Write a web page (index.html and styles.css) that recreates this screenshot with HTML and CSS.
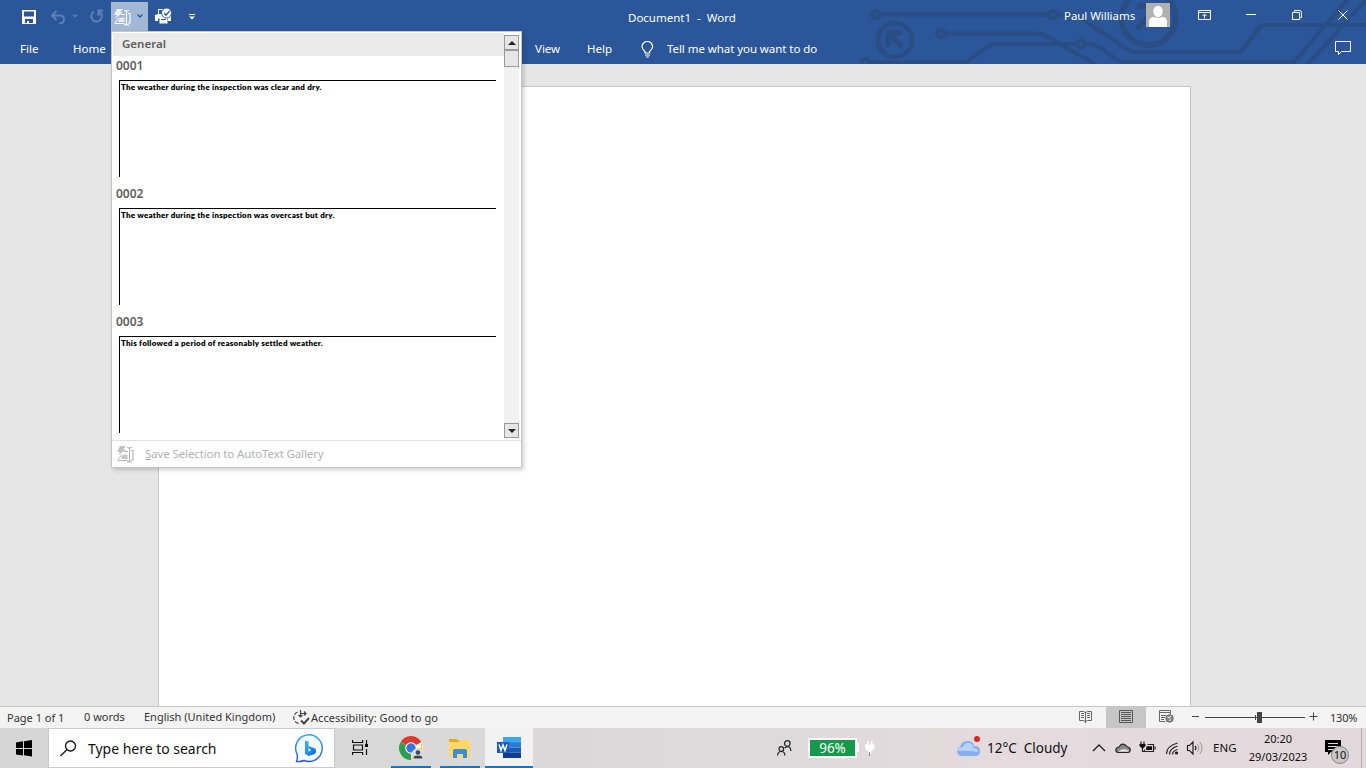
FILE: index.html
```
<!DOCTYPE html>
<html lang="en">
<head>
  <meta charset="UTF-8">
  <meta name="viewport" content="width=device-width, initial-scale=1.0">
  <title>Document1 - Word</title>
  <link rel="stylesheet" href="styles.css">
</head>
<body>
  <div class="screen">
    <header class="header">
      <svg class="circuit" width="506" height="64" viewBox="860 0 506 64">
        <g fill="none" stroke="#2a4d83" stroke-width="4">
          <circle cx="875.5" cy="14.5" r="3.6"/>
          <path d="M879 14.5h170"/>
          <circle cx="1053" cy="14.5" r="3.6"/>
          <path d="M1057 14.5h13q7 0 13 5l41 28q6 4.500 11 4.500h103q3 0 5-3l15-20q3-4 7-4h101"/>
          <circle cx="941" cy="33.500" r="3.6"/>
          <path d="M945 33.500h92q6 0 12 4l47 27"/>
          <circle cx="865" cy="62.500" r="3.6"/>
          <path d="M869 62.500h97l20-15q5-3.500 9-3.500h82"/>
          <circle cx="1081" cy="44" r="3.6"/>
          <path d="M1085 44h4q6 0 12 4l15 11q4 3 8 3h170l55-64M1307 65l60-66"/>
          <circle cx="895" cy="40" r="17" stroke-width="4.500"/>
          <path d="M902 33h-14v14M888 33l14 14" stroke-width="5"/>
          <circle cx="1148.500" cy="18" r="27" stroke-width="6"/>
          <path d="M1137 6h22v22M1159 6l-22 23" stroke-width="6"/>
        </g>
      </svg>
      <div class="titlebar">
        <div class="quick">
          <svg class="save" width="14" height="14" viewBox="0 0 14 14"><path fill="#fff" fill-rule="evenodd" d="M0 0h14v14H0zM2 1.500v5h10v-5zM3 9v4h2v-2h2v2h4V9z"/></svg>
          <svg class="undo" width="28" height="14" viewBox="0 0 28 14" fill="none" stroke="#5f80b3"><path d="M5.500 1L1 5.500 5.500 10M1 5.500h8q4 0 4 4t-4 4H8" stroke-width="2"/><path d="M22 4.500l2.200 2.200 2.200-2.200" stroke-width="1.300"/></svg>
          <svg class="redo" width="14" height="14" viewBox="0 0 14 14" fill="none" stroke="#5f80b3" stroke-width="2"><path d="M9.500 2.800A5.300 5.300 0 1 1 4 2.600M8.500 7V1.500H13"/></svg>
          <div class="autotext">
            <svg width="17" height="17" viewBox="0 0 17 17"><use href="#autotext-icon"/></svg>
            <svg class="arrow" width="6" height="4" viewBox="0 0 6 4"><path d="M.5.500L3 3 5.500.500" fill="none" stroke="#2b579a" stroke-width="1.300"/></svg>
          </div>
          <svg class="print" width="17" height="17" viewBox="0 0 17 17">
            <path fill="#fff" d="M3 1h5v1H4v4h9l3 1v6h-3v-2.500H3V13H0V7l3-1z"/>
            <path d="M4.500 10h8v5.500h-8z" fill="#fff"/>
            <path d="M6 11.500h5" stroke="#2b579a"/>
            <circle cx="11.500" cy="5" r="5" fill="#fff" stroke="#2b579a"/>
            <path d="M9 5l2 2.200L14.500 3" fill="none" stroke="#2b579a" stroke-width="1.400"/>
          </svg>
          <svg class="customize" width="6" height="6" viewBox="0 0 6 6"><path d="M0 0h6v1H0zM0 2.500h6L3 5.500z" fill="#fff"/></svg>
        </div>
        <div class="doc-title">Document1 &nbsp;-&nbsp; Word</div>
        <div class="user">Paul Williams</div>
        <svg class="avatar" width="24" height="24" viewBox="0 0 24 24"><path fill="#b1b1b1" d="M0 0h24v24H0z"/><ellipse cx="12" cy="8.500" rx="4.700" ry="5.700" fill="#fff"/><path fill="#fff" d="M3 24v-5q0-5 5-5 4 2 8 0 5 0 5 5v5z"/></svg>
        <svg class="window-buttons" width="155" height="14" viewBox="1197 8 155 14" fill="none" stroke="#fff">
          <path d="M1198.500 10.500h12v9h-12zM1198 12.500h13M1204.500 18.500v-4M1202.500 16l2-2 2 2M1246 14.500h10M1292.500 12.500h7v7h-7zM1294.500 12v-1.500h5q2 0 2 2v5H1300M1338.500 10.500l9 9M1347.500 10.500l-9 9"/>
        </svg>
      </div>
      <nav class="tabs">
        <span class="tab file">File</span>
        <span class="tab home">Home</span>
        <span class="tab view">View</span>
        <span class="tab help">Help</span>
        <svg class="bulb" width="13" height="17" viewBox="0 0 13 17" fill="none" stroke="#fff" stroke-width="1.200"><path d="M4 12V10.500Q1 8 1 5.500a5.300 5 0 0 1 10.600 0Q11.600 8 8.600 10.500V12zM4 14h5M5 16h3"/></svg>
        <span class="tab tell">Tell me what you want to do</span>
        <svg class="comment" width="17" height="15" viewBox="0 0 17 15" fill="none" stroke="#fff"><path d="M.5.500h15v10h-9l-3 3v-3h-3z"/></svg>
      </nav>
    </header>

    <main class="workspace">
      <div class="page"></div>
      <div class="gallery">
        <div class="gallery-body">
          <div class="entries">
            <div class="category">General</div>
            <div class="entry">
              <h3>0001</h3>
              <div class="preview">The weather during the inspection was clear and dry.</div>
            </div>
            <div class="entry">
              <h3>0002</h3>
              <div class="preview">The weather during the inspection was overcast but dry.</div>
            </div>
            <div class="entry">
              <h3>0003</h3>
              <div class="preview">This followed a period of reasonably settled weather.</div>
            </div>
          </div>
          <div class="scrollbar">
            <div class="scroll-btn"><svg width="8" height="4" viewBox="0 0 8 4"><path d="M0 4h8L4 0z" fill="#222"/></svg></div>
            <div class="thumb"></div>
            <div class="scroll-btn down"><svg width="8" height="4" viewBox="0 0 8 4"><path d="M0 0h8L4 4z" fill="#222"/></svg></div>
          </div>
        </div>
        <div class="gallery-footer">
          <svg width="17" height="17" viewBox="0 0 17 17"><use href="#autotext-icon"/></svg>
          <span><u>S</u>ave Selection to AutoText Gallery</span>
        </div>
      </div>
    </main>

    <footer class="statusbar">
      <span class="pages">Page 1 of 1</span>
      <span class="words">0 words</span>
      <span class="language">English (United Kingdom)</span>
      <svg class="access-icon" width="17" height="16" viewBox="0 0 17 16" fill="none" stroke="#444" stroke-width="1.200"><path d="M4.500 2A6 6 0 0 0 6 13.500" stroke-dasharray="4 1.500"/><path d="M7.500 0v7M5.500 5l2 2 2-2M7 3.500h6M11 1.500l2 2-2 2"/><path d="M8 10.500l3 3 5-5.500" stroke-width="1.900"/></svg>
      <span class="access">Accessibility: Good to go</span>
      <svg class="read" width="13" height="13" viewBox="0 0 13 13" fill="none" stroke="#666"><path d="M.5 1.500h4l2 1 2-1h4v9h-4l-2 1-2-1h-4zM6.500 2v11M2 3.500h3M2 5.500h3M2 7.500h3M8 3.500h3M8 5.500h3M8 7.500h3"/></svg>
      <div class="print-view"><svg width="14" height="13" viewBox="0 0 14 13" fill="none" stroke="#555"><path d="M.5.500h13v12H.5zM2 2.500h10M2 4.500h10M2 6.500h10M2 8.500h10M2 10.500h10"/></svg></div>
      <svg class="web" width="15" height="13" viewBox="0 0 15 13" fill="none" stroke="#666"><path d="M6 11.500H.5V.500h11v4M0 2.500h12M2 5.500h5M2 7.500h4M2 9.500h3"/><circle cx="10.500" cy="8.500" r="3.700" fill="#888"/><path d="M8.500 7l2 1 1-2M10 11l2-1.500" stroke="#eee"/></svg>
      <svg class="zoom" width="127" height="13" viewBox="1191 0 127 13" fill="none" stroke="#444"><path d="M1192 6.500h7M1205 7.500h100M1309.500 6.500h8M1313.500 2.500v8M1255.500 5v5"/><path d="M1257 2h5v11h-5z" fill="#444" stroke="none"/></svg>
      <span class="percent">130%</span>
    </footer>

    <div class="taskbar">
      <svg class="start" width="17" height="17" viewBox="0 0 17 17"><path d="M0 2.500L7 1.300V8H0zM8 1.200L16 0v8H8zM0 9h7v6.600l-7-1zM8 9h8v7.500l-8-1.200z"/></svg>
      <div class="search">
        <svg width="18" height="17" viewBox="0 0 18 17" fill="none" stroke="#111" stroke-width="1.300"><circle cx="10.500" cy="6" r="5"/><path d="M7 9.500L.5 16"/></svg>
        <span>Type here to search</span>
        <svg class="bing" width="29" height="29" viewBox="0 0 29 29">
          <defs>
            <linearGradient id="ring" x2="0" y2="1"><stop stop-color="#29a9ed"/><stop offset="1" stop-color="#2457cb"/></linearGradient>
            <linearGradient id="b" x2="1" y2="1"><stop stop-color="#30bbed"/><stop offset="1" stop-color="#1565d8"/></linearGradient>
          </defs>
          <path d="M1.500 27.500Q3 24 2 20A13.300 13.300 0 1 1 9 26.500Q5 28 1.500 27.500z" fill="#f4f8ff" stroke="url(#ring)" stroke-width="1.400"/>
          <path d="M10 6.500l3.500 1.300v10l2.800-1.700-2-1-1-3 7 2.500q2 4-1 5.700L13.500 22 10 19.800z" fill="url(#b)"/>
        </svg>
      </div>
      <svg class="taskview" width="17" height="15" viewBox="0 0 17 15" fill="none" stroke="#111" stroke-width="1.200"><path d="M.6 0v2.500h10V0M1.500 5h9v5h-9zM.6 15v-2.500h10V15M14.500 0v4M14.500 9v6"/><path d="M13 4h3v3h-3z" fill="#111" stroke="none"/></svg>
      <div class="app chrome">
        <svg width="26" height="26" viewBox="0 0 26 26">
          <circle cx="12" cy="12" r="12" fill="#fff"/>
          <path d="M12 12L1.600 6A12 12 0 0 1 22.400 6z" fill="#df3a30"/>
          <path d="M12 12L1.600 6A12 12 0 0 0 12 24z" fill="#2f9e4f"/>
          <path d="M12 12h10V6A12 12 0 0 1 12 24l3-9z" fill="#f8cc34"/>
          <circle cx="12" cy="12" r="5.800" fill="#fff"/><circle cx="12" cy="12" r="4.700" fill="#3478de"/>
          <circle cx="19" cy="19" r="6.700" fill="#d6dce1"/><circle cx="19" cy="16.500" r="2.300" fill="#404850"/><path d="M14.700 22.500v-1q0-2 4.300-2t4.300 2v1z" fill="#404850"/>
        </svg>
      </div>
      <div class="app explorer">
        <svg width="22" height="19" viewBox="0 0 22 19"><path d="M0 0h8l2 2h11v16H0z" fill="#e4a91e"/><path d="M10 1h11v3H10zM0 3h21v15H0z" fill="#ffd867"/><path d="M4 19v-7q0-2 2-2h10q2 0 2 2v7h-4v-4H8v4z" fill="#3b8ed5"/></svg>
      </div>
      <div class="app word">
        <svg width="24" height="21" viewBox="0 0 24 21"><path d="M6 0h18v6H6z" fill="#41a5ee"/><path d="M6 5.500h18v5H6z" fill="#2b7cd3"/><path d="M6 10.500h18v5H6z" fill="#185abd"/><path d="M6 15.500h18V21H6z" fill="#103f91"/><path d="M0 5h12v11H0z" fill="#185abd"/><path d="M2 7.500l2 6 2-5.500 2 5.500 2-6" fill="none" stroke="#fff" stroke-width="1.500"/></svg>
      </div>
      <svg class="people" width="15" height="16" viewBox="0 0 15 16" fill="none" stroke="#222" stroke-width="1.200"><circle cx="10.300" cy="3.500" r="2.800"/><circle cx="4.300" cy="9" r="2.300"/><path d="M.7 15.500q0-4 3.600-4t3.600 4M7.500 8q5.500-4 6.500 3"/></svg>
      <div class="battery">96%</div>
      <svg class="plug" width="18" height="16" viewBox="0 0 18 16"><path d="M0 3h2v9H0zM10 1h1.500v4H10zM14 1h1.500v4H14zM8 4.500h9.500v3q-.5 3-3.500 4V14h-2.500v-2.500Q8.500 10.500 8 7.500z" fill="#fff"/><path d="M12.500 12v4" stroke="#888"/></svg>
      <svg class="cloud" width="26" height="22" viewBox="0 0 26 22"><path d="M5 20a5 5 0 0 1 0-9q1-6 8-6 5 0 6 5 6 0 6 5t-5 5z" fill="#83aff0"/><path d="M3 15q0-4 5-4 2-5 7-4 4 2 3 5 5 0 5 4-9-2-20-1z" fill="#b8d3fa"/><circle cx="22" cy="3" r="3" fill="#d12b22"/></svg>
      <span class="weather">12°C&nbsp; Cloudy</span>
      <svg class="tray" width="112" height="18" viewBox="1092 0 112 18" fill="none" stroke="#222" stroke-width="1.400">
        <path d="M1093 12l6-6 6 6"/>
        <path d="M1118.500 13.500q-3.500-.5-2.500-3.500 1-2 3-2 3-5 7-1.500 1 1.500 2 1.500 3 1 2 4-.5 1.500-2.500 1.500z" fill="#8c8889" stroke-width="1.200"/>
        <path d="M1118 12.700q5-5 11-1l-.5 1z" fill="#ddd" stroke="none"/>
        <path d="M1147.500 5.500h6v7h-9v-2" stroke-width="1.200"/><path d="M1146.500 7.200h5.500v3.800h-6z" fill="#111" stroke="none"/>
        <path d="M1141 2.500v2.500M1144 2.500v2.500M1155 7.500v3" stroke-width="1.200"/><path d="M1139.500 5h6v2l-2 2h-2l-2-2z" fill="#111" stroke="none"/><path d="M1142.500 9v3.500h2" stroke-width="1.200"/>
        <g stroke-width="1.200"><path d="M1166.500 15q0-8 11-11M1169.500 15.500q0-6 8-8.500M1172.500 15.500q0-3.500 5-5"/><circle cx="1176.500" cy="14" r="1" fill="#111"/></g>
        <path d="M1187.500 6.500h2l3.500-3.500v12l-3.500-3.500h-2zM1195 7q2 2 0 4" stroke-width="1.200"/><path d="M1197.500 5q3 4 0 8M1200 3q4 6 0 12" stroke="#999" stroke-width="1"/>
      </svg>
      <span class="input">ENG</span>
      <div class="clock"><span>20:20</span><span>29/03/2023</span></div>
      <div class="notifications">
        <svg width="17" height="16" viewBox="0 0 17 16"><path d="M0 0h16v12H6l-3 3v-3H0z"/><path d="M3 3.500h10M3 6.500h10M3 9.500h7" stroke="#ddd"/></svg>
        <span class="count">10</span>
      </div>
      <div class="show-desktop"></div>
    </div>
  </div>

  <svg width="0" height="0" class="symbols">
    <symbol id="autotext-icon" viewBox="0 0 17 17">
      <path d="M3 0h6L6 3.500h3L1 9.500 3 6H0z" fill="currentColor" opacity=".8"/>
      <path d="M7 5.500h4M5 8.500l-4 5v1h9.500" fill="none" stroke="currentColor"/>
      <path d="M4 13l1-3 2-1.500h3.500V13z" fill="currentColor" opacity=".75"/>
      <path d="M10 1.500q2.500 0 2.500 1.500 0-1.500 2.500-1.500M12.500 3v11.500M10 16q2.500 0 2.500-1.500 0 1.500 2.500 1.500M14 4.500h2v9.500h-2" fill="none" stroke="currentColor" stroke-width="1.100"/>
    </symbol>
  </svg>
</body>
</html>
```
FILE: styles.css
```
* {
  box-sizing: border-box;
}
body {
  margin: 0;
  overflow: hidden;
  font-family: "Noto Sans", "Open Sans", sans-serif;
  font-size: 11.5px;
}
svg {
  display: block;
  flex-shrink: 0;
}
.screen {
  width: 1366px;
  height: 768px;
  display: flex;
  flex-direction: column;
}
.symbols {
  position: absolute;
}

/* title bar and tabs */
.header {
  position: relative;
  height: 64px;
  background-color: #2b579a;
  color: white;
}
.circuit {
  position: absolute;
  top: 0;
  right: 0;
}
.titlebar {
  position: relative;
  height: 32px;
  display: flex;
  white-space: nowrap;
}
.quick {
  width: 628px;
  padding-left: 22px;
  display: flex;
}
.save {
  margin-top: 10px;
}
.undo {
  margin: 10px 0 0 15px;
}
.redo {
  margin: 9px 0 0 11px;
}
.autotext {
  width: 37px;
  height: 29px;
  margin: 2px 0 0 7px;
  padding: 7px 0 0 3px;
  display: flex;
  gap: 6px;
  background-color: #a3b8d6;
}
.autotext .arrow {
  margin-top: 5px;
}
.print {
  margin: 8px 0 0 7px;
}
.customize {
  margin: 14px 0 0 17px;
}
.doc-title {
  width: 436px;
  line-height: 35px;
}
.user {
  width: 82px;
  line-height: 32px;
  letter-spacing: -0.05px;
}
.avatar {
  margin-top: 3px;
}
.window-buttons {
  margin: 8px 0 0 27px;
}
.tabs {
  position: relative;
  height: 32px;
  display: flex;
  line-height: 33px;
  white-space: nowrap;
}
.file {
  width: 73px;
  padding-left: 20px;
}
.home {
  width: 462px;
}
.view {
  width: 52px;
}
.help {
  width: 54px;
}
.bulb {
  margin-top: 9px;
}
.tell {
  width: 681px;
  padding-left: 13px;
  letter-spacing: -0.06px;
}
.comment {
  margin-top: 9px;
}

/* document */
.workspace {
  position: relative;
  height: 642px;
  padding: 22px 175px 0 158px;
  background-color: #e6e6e6;
}
.page {
  height: 620px;
  background-color: white;
  border: 1px solid #c6c6c6;
  border-bottom: none;
}

/* AutoText menu */
.gallery {
  position: absolute;
  top: -33px;
  left: 111px;
  width: 411px;
  height: 437px;
  border: 1px solid #c6c6c6;
  background-color: white;
  box-shadow: 2px 2px 4px rgba(0, 0, 0, 0.18);
}
.gallery-body {
  height: 409px;
  padding: 1px 1px 0;
  display: flex;
  border-bottom: 1px solid #e1e1e1;
}
.entries {
  width: 391px;
  color: #5e5e5e;
}
.category {
  height: 23px;
  padding-left: 9px;
  line-height: 22px;
  font-weight: 600;
  background-color: #eaeaea;
}
.entry {
  height: 128px;
  padding: 0 8px 0 3px;
}
.entry h3 {
  height: 24px;
  margin: 0;
  font-size: 12px;
  font-weight: 600;
  line-height: 20px;
}
.preview {
  height: 97px;
  margin-left: 3px;
  padding-left: 1px;
  border-top: 1px solid black;
  border-left: 1px solid black;
  color: black;
  font-family: Lato, sans-serif;
  font-size: 8px;
  font-weight: 800;
  letter-spacing: 0.23px;
  line-height: 12px;
  white-space: nowrap;
}
.scrollbar {
  width: 15px;
  height: 403px;
  margin-top: 2px;
  display: flex;
  flex-direction: column;
  background-color: #f1f1f1;
}
.scroll-btn {
  height: 15px;
  display: flex;
  align-items: center;
  justify-content: center;
  border: 1px solid #999;
  background-color: #e6e6e6;
}
.thumb {
  height: 17px;
  border: 1px solid #999;
  background-color: #e6e6e6;
}
.down {
  margin-top: auto;
}
.gallery-footer {
  height: 26px;
  padding: 5px 0 0 5px;
  display: flex;
  gap: 11px;
  color: #b1b1b1;
  line-height: 16px;
  letter-spacing: -0.12px;
}

/* status bar */
.statusbar {
  height: 22px;
  display: flex;
  padding-left: 7px;
  border-top: 1px solid #c6c6c6;
  background-color: #f3f3f3;
  color: #333;
  font-size: 11px;
  line-height: 21px;
  white-space: nowrap;
}
.pages {
  width: 77px;
}
.words {
  width: 60px;
}
.words,
.language {
  line-height: 20px;
}
.language {
  width: 149px;
}
.access-icon {
  margin-top: 3px;
}
.access {
  width: 769px;
  padding-left: 1px;
  letter-spacing: 0.05px;
}
.read {
  margin-top: 3px;
}
.print-view {
  width: 40px;
  margin-left: 14px;
  padding: 3px 0 0 13px;
  background-color: #c6c6c6;
}
.web {
  margin: 3px 0 0 13px;
}
.zoom {
  margin: 3px 0 0 17px;
}
.percent {
  margin-left: 12px;
  letter-spacing: -0.2px;
}

/* taskbar */
.taskbar {
  height: 40px;
  display: flex;
  background: linear-gradient(to right, #d6d6d6, #dcdadb 55%, #e5dadd 72%, #e3d8dc);
  color: #111;
  font-size: 12px;
  white-space: nowrap;
}
.start {
  margin: 12px 0 0 16px;
}
.search {
  width: 287px;
  height: 40px;
  margin-left: 15px;
  padding-left: 11px;
  display: flex;
  align-items: center;
  border: 1px solid #c9c9c9;
  background-color: white;
  font-size: 14px;
}
.search span {
  width: 217px;
  flex-shrink: 0;
  padding-left: 10px;
  letter-spacing: -0.02px;
}
.taskview {
  margin: 12px 0 0 17px;
}
.app {
  height: 40px;
  border-bottom: 2px solid #0078d7;
}
.chrome {
  width: 40px;
  margin-left: 22px;
  padding: 8px 0 0 8px;
}
.explorer {
  width: 40px;
  margin-left: 9px;
  padding: 11px 0 0 9px;
}
.word {
  width: 48px;
  margin-left: 5px;
  padding: 9px 0 0 12px;
  background-color: #f2f2f2;
}
.people {
  margin: 12px 0 0 244px;
}
.battery {
  width: 49px;
  height: 20px;
  margin: 10px 0 0 16px;
  border: 2px solid white;
  background-color: #16994a;
  color: white;
  font-size: 13.5px;
  line-height: 16px;
  text-align: center;
}
.plug {
  margin-top: 12px;
}
.cloud {
  margin: 8px 0 0 80px;
}
.weather {
  width: 111px;
  padding-left: 6px;
  font-size: 13.5px;
  line-height: 40px;
}
.tray {
  margin-top: 11px;
}
.input {
  width: 42px;
  padding-left: 9px;
  font-size: 11.5px;
  line-height: 39px;
}
.clock {
  width: 64px;
  display: flex;
  flex-direction: column;
  align-items: center;
  font-size: 11px;
  line-height: 18px;
  padding-top: 2px;
}
.notifications {
  position: relative;
  margin: 12px 0 0 15px;
}
.count {
  position: absolute;
  top: 6px;
  left: 6px;
  width: 18px;
  height: 18px;
  border: 1px solid #888;
  border-radius: 50%;
  background-color: #ccc6c8;
  font-size: 11px;
  line-height: 16px;
  text-align: center;
}
.show-desktop {
  width: 5px;
  margin-left: auto;
  border-left: 1px solid #b5adb0;
}
```
